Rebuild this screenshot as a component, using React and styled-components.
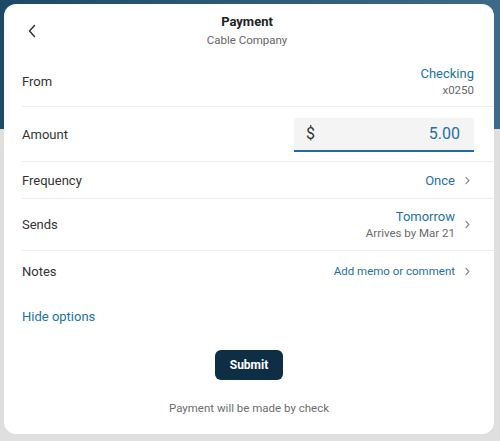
import React from 'react';
import styled, { createGlobalStyle } from 'styled-components';

const GlobalStyle = createGlobalStyle`
  html, body {
    margin: 0;
    padding: 0;
  }
  body {
    font-family: Roboto, "Liberation Sans", Arial, sans-serif;
    background: #dfdfdf;
  }
`;

const Page = styled.div`
  width: 500px;
  height: 441px;
  padding: 4px 6px 7px 4px;
  box-sizing: border-box;
  background: linear-gradient(to bottom, transparent 129px, #dfdfdf 129px),
    linear-gradient(to right, #1d4968, #3c6b89);
`;

const Card = styled.div`
  height: 100%;
  background: #ffffff;
  border-radius: 12px;
  padding-left: 18px;
  box-sizing: border-box;
  display: flex;
  flex-direction: column;
`;

const Header = styled.div`
  height: 53px;
  display: grid;
  grid-template-columns: 40px 1fr 40px;
  align-items: center;
  padding-right: 22px;
  padding-top: 1px;
  box-sizing: border-box;
`;

const BackButton = styled.button`
  background: none;
  border: none;
  padding: 0 0 0 5px;
  display: flex;
  align-items: center;
  cursor: pointer;
  color: #333;
`;

const TitleBlock = styled.div`
  text-align: center;
`;

const Title = styled.div`
  font-size: 13px;
  font-weight: 700;
  color: #222;
  line-height: 18px;
`;

const Subtitle = styled.div`
  font-size: 11.5px;
  color: #666;
  line-height: 18px;
`;

const Row = styled.div`
  display: flex;
  align-items: center;
  justify-content: space-between;
  height: ${p => p.h}px;
  padding-right: 20px;
  border-bottom: ${p => (p.last ? 'none' : '1px solid #eeeeee')};
  box-sizing: border-box;
`;

const Label = styled.div`
  font-size: 13px;
  color: #333;
`;

const Value = styled.div`
  display: flex;
  align-items: center;
  gap: 10px;
`;

const ValueText = styled.div`
  text-align: right;
  line-height: 17px;
`;

const Link = styled.div`
  font-size: ${p => p.size || 13}px;
  color: #2272a2;
`;

const Sub = styled.div`
  font-size: 11.5px;
  color: #6a6a6a;
`;

const Chevron = styled.span`
  display: flex;
  color: #8a8a8a;
  margin-right: 4px;
`;

const AmountField = styled.div`
  width: 180px;
  height: 34px;
  background: #f4f4f4;
  border-radius: 3px 3px 0 0;
  border-bottom: 2px solid #1f6c9c;
  display: flex;
  align-items: center;
  justify-content: space-between;
  padding: 0 14px 0 12px;
  box-sizing: border-box;
  margin-top: 1px;
`;

const Dollar = styled.span`
  font-size: 16px;
  color: #333;
`;

const AmountValue = styled.span`
  font-size: 16px;
  color: #2272a2;
`;

const HideLink = styled.div`
  font-size: 13px;
  color: #2272a2;
  margin-top: 18px;
`;

const Footer = styled.div`
  display: flex;
  flex-direction: column;
  align-items: center;
  padding-right: 18px;
  margin-top: 26px;
`;

const SubmitButton = styled.button`
  width: 68px;
  height: 30px;
  border: none;
  border-radius: 6px;
  background: #0e2e46;
  color: #fff;
  font-family: inherit;
  font-size: 12px;
  font-weight: 700;
  cursor: pointer;
`;

const Note = styled.div`
  font-size: 11.5px;
  color: #6e6e6e;
  margin-top: 21px;
`;

const ChevronIcon = () => (
  <Chevron>
    <svg width="5" height="9" viewBox="0 0 5 9" fill="none">
      <path d="M1 1.3L3.9 4.5L1 7.7" stroke="currentColor" strokeWidth="1.2" strokeLinecap="round" strokeLinejoin="round" />
    </svg>
  </Chevron>
);

const App = () => {
  return (
    <Page>
      <GlobalStyle />
      <Card>
        <Header>
          <BackButton aria-label="Back">
            <svg width="10" height="14" viewBox="0 0 10 14" fill="none">
              <path d="M7.5 1.5L2.5 7L7.5 12.5" stroke="currentColor" strokeWidth="1.5" strokeLinecap="round" strokeLinejoin="round" />
            </svg>
          </BackButton>
          <TitleBlock>
            <Title>Payment</Title>
            <Subtitle>Cable Company</Subtitle>
          </TitleBlock>
          <span />
        </Header>

        <Row h={50}>
          <Label>From</Label>
          <ValueText>
            <Link>Checking</Link>
            <Sub>x0250</Sub>
          </ValueText>
        </Row>

        <Row h={55}>
          <Label>Amount</Label>
          <AmountField>
            <Dollar>$</Dollar>
            <AmountValue>5.00</AmountValue>
          </AmountField>
        </Row>

        <Row h={37}>
          <Label>Frequency</Label>
          <Value>
            <Link>Once</Link>
            <ChevronIcon />
          </Value>
        </Row>

        <Row h={52}>
          <Label>Sends</Label>
          <Value>
            <ValueText>
              <Link>Tomorrow</Link>
              <Sub>Arrives by Mar 21</Sub>
            </ValueText>
            <ChevronIcon />
          </Value>
        </Row>

        <Row h={40} last>
          <Label>Notes</Label>
          <Value>
            <Link size={11.5}>Add memo or comment</Link>
            <ChevronIcon />
          </Value>
        </Row>

        <HideLink>Hide options</HideLink>

        <Footer>
          <SubmitButton>Submit</SubmitButton>
          <Note>Payment will be made by check</Note>
        </Footer>
      </Card>
    </Page>
  );
};

export default App;
